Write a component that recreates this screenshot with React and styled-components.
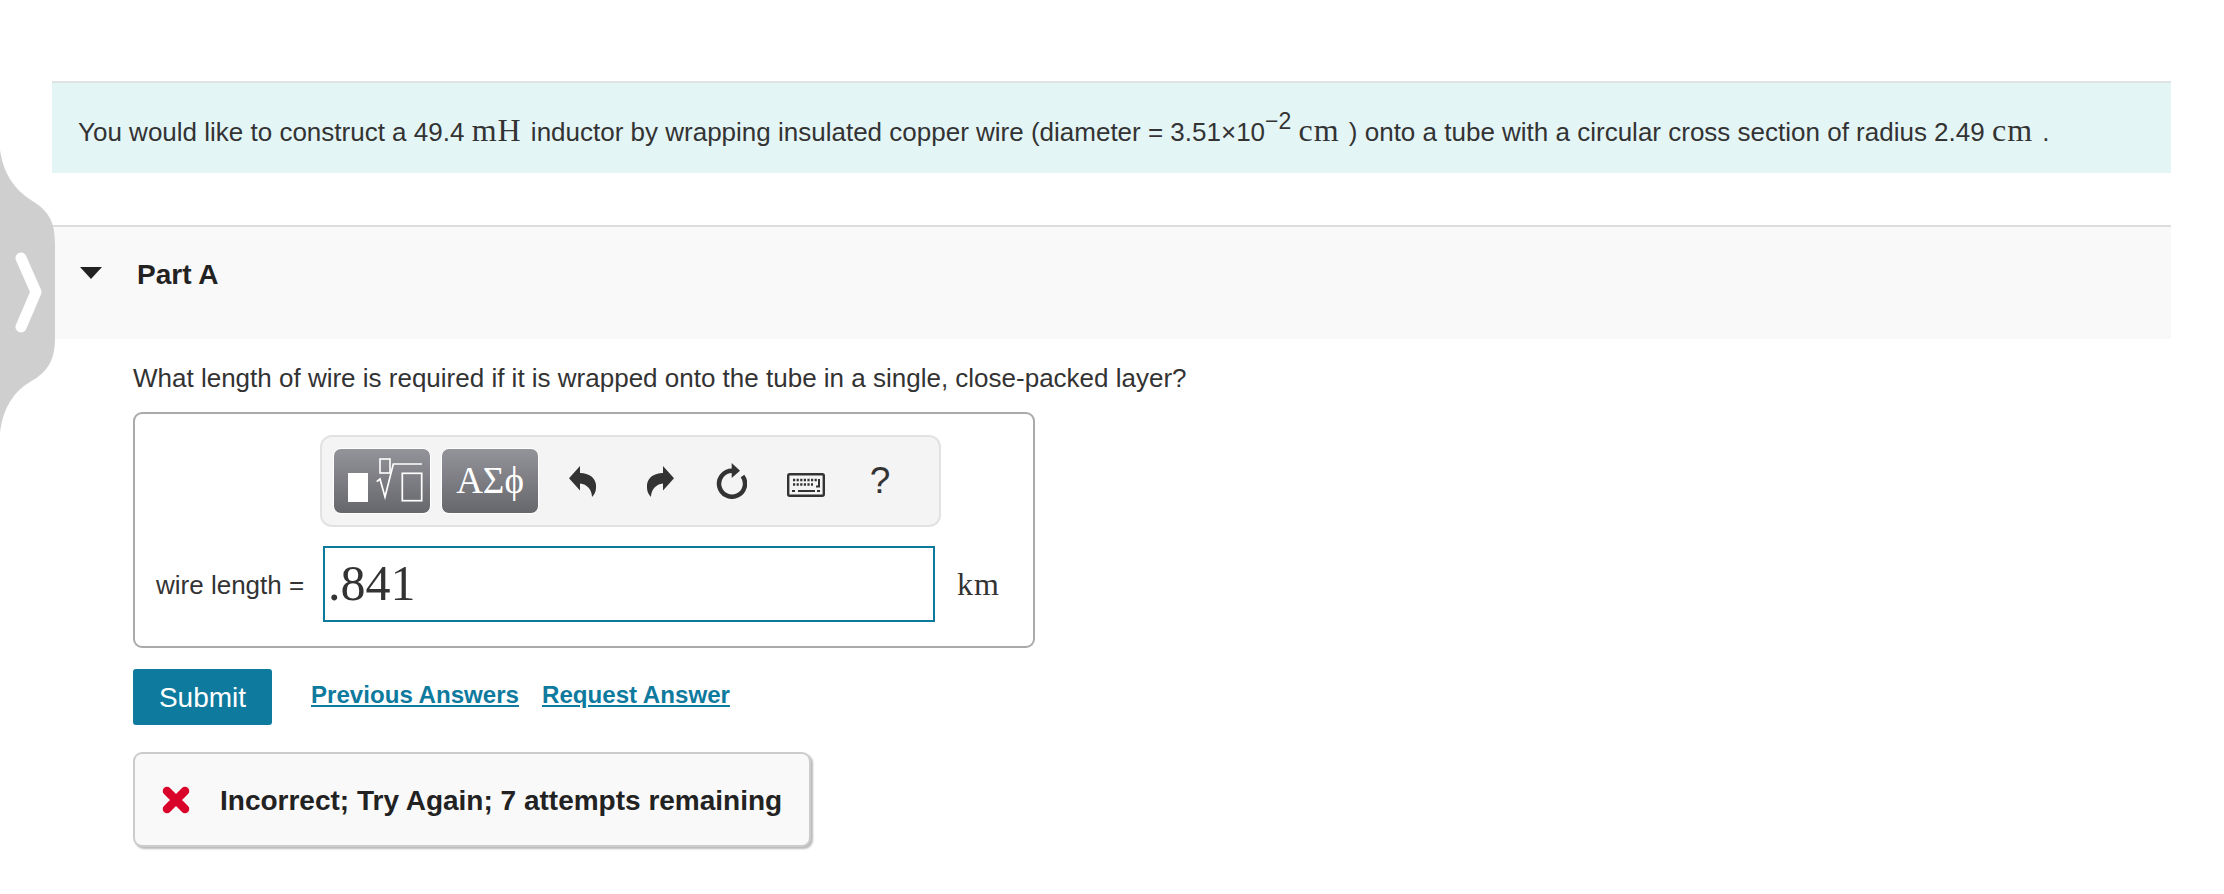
import React from 'react';
import styled, { createGlobalStyle } from 'styled-components';

const Global = createGlobalStyle`
  html, body { margin: 0; padding: 0; background: #fff; }
  body { font-family: "Liberation Sans", Arial, sans-serif; color: #333; }
`;
const Page = styled.div`
  position: relative; width: 2224px; height: 894px; overflow: hidden;
  padding: 81px 53px 0 52px; box-sizing: border-box;
`;
const Handle = styled.svg`position: absolute; left: 0; top: 140px;`;
const Intro = styled.div`
  height: 92px; box-sizing: border-box; border-top: 2px solid #dfe3e4; background: #e4f5f6;
  padding: 8px 26px 0; display: flex; align-items: center; font-size: 26px; color: #333;
`;
const IntroText = styled.span`white-space: pre;`;
const Math = styled.span`
  font-family: "Liberation Serif", serif; font-size: 32px; line-height: 0; letter-spacing: 1px; margin-right: 2px;
`;
const Sup = styled.sup`font-size: 23px; line-height: 0; vertical-align: 12px;`;
const PartHeader = styled.div`
  margin-top: 52px; height: 114px; box-sizing: border-box; border-top: 2px solid #ddd; background: #f9f9f9;
  display: flex; align-items: center; padding: 0 0 16px 28px;
`;
const Caret = styled.span`
  width: 0; height: 0; border-left: 11px solid transparent; border-right: 11px solid transparent;
  border-top: 12px solid #222; margin-right: 35px; margin-top: -4px;
`;
const PartTitle = styled.h2`margin: 0; font-size: 28px; font-weight: 700; color: #222;`;
const Body = styled.div`padding-left: 81px;`;
const Question = styled.p`margin: 24px 0 0; font-size: 26px; line-height: 30px; color: #333;`;
const AnswerBox = styled.div`
  margin-top: 19px; width: 902px; height: 236px; box-sizing: border-box; border: 2px solid #aaa; border-radius: 9px;
  padding: 21px 0 0 21px; display: flex; flex-direction: column;
`;
const Toolbar = styled.div`
  margin-left: 164px; width: 621px; height: 92px; box-sizing: border-box; border: 2px solid #e2e2e2; border-radius: 12px;
  background: #f4f4f4; display: flex; align-items: center; padding-left: 11px;
`;
const TemplateBtn = styled.div`
  width: 96px; height: 64px; border-radius: 8px; margin-right: 10px;
  background: linear-gradient(#93939a, #66676b); border: 1px solid #fff;
  display: flex; align-items: center; justify-content: center; color: #fff;
  font-family: "Liberation Serif", serif; font-size: 37px; flex: none; line-height: 60px;
`;
const ToolIcon = styled.div`
  width: ${p => p.$w}px; flex: none; display: flex; align-items: center; justify-content: center; color: #333;
  font-size: 37px; font-family: "Liberation Sans", sans-serif; margin-top: ${p => p.$mt || 0}px;
`;
const InputRow = styled.div`display: flex; align-items: center; margin-top: 19px; font-size: 26px; color: #333;`;
const Label = styled.span`width: 167px; flex: none; white-space: pre; margin-top: 2px;`;
const Field = styled.div`
  width: 612px; height: 76px; box-sizing: border-box; border: 2px solid #0d7a9c; background: #fff;
  font-family: "Liberation Serif", serif; font-size: 50px; line-height: 70px; padding-left: 3px; color: #333;
`;
const Unit = styled.span`
  margin-left: 22px; font-family: "Liberation Serif", serif; font-size: 32px; letter-spacing: 1px; color: #333;
`;
const Actions = styled.div`margin-top: 21px; display: flex; align-items: flex-start;`;
const Submit = styled.button`
  width: 139px; height: 56px; border: 0; border-radius: 3px; background: #0e7a9e; color: #fff;
  font-family: "Liberation Sans", sans-serif; font-size: 28px; padding: 2px 0 0;
`;
const Links = styled.div`display: flex; gap: 23px; margin-left: 39px; margin-top: 12px;`;
const ActionLink = styled.a`font-size: 24.1px; font-weight: 700; color: #0e7a9e; text-decoration: underline;`;
const Feedback = styled.div`
  margin-top: 27px; width: 678px; height: 95px; box-sizing: border-box; border: 2px solid #ccc; border-radius: 9px; background: #f9f9f9;
  box-shadow: 2px 2px 2px #bbb; display: flex; align-items: center; padding: 0 0 0 26px;
`;
const FeedbackText = styled.span`margin-left: 29px; font-size: 28px; font-weight: 700; color: #222; margin-top: 3px;`;

const Keyboard = () => (
  <svg width="38" height="24" viewBox="0 0 38 24" fill="none">
    <rect x="1.2" y="1.2" width="35.6" height="21.6" rx="1.5" stroke="#333" strokeWidth="2.4" />
    <path d="M6 7h24M6 11.5h20" stroke="#333" strokeWidth="2.4" strokeDasharray="2.2 1.4" />
    <path d="M32 6v7.5h-3" stroke="#333" strokeWidth="2" />
    <path d="M5 18h3M11 18h17M30 18h3" stroke="#333" strokeWidth="2.2" />
  </svg>
);
const Undo = ({ flip }) => (
  <svg width="27" height="31" viewBox="0 0 27 31" style={flip ? { transform: 'scaleX(-1)' } : undefined}>
    <path fill="#333" d="M0 12.3L11 0V7C22 7 28 14 27 22C27 26 25 29 23 31C23 24 18 18 11 17.5V24.5Z" />
  </svg>
);

export default function App() {
  return (
    <Page>
      <Global />
      <Handle width="60" height="300" viewBox="0 0 60 300">
        <path fill="#cfcfcf" d="M0 10C4 38 18 52 34 62C50 72 55 84 55 104V198C55 220 48 232 30 242C14 251 3 268 0 292Z" />
        <path fill="none" stroke="#fff" strokeWidth="11" strokeLinecap="round" strokeLinejoin="round" d="M21 118L36 152L21 187" />
      </Handle>
      <Intro>
        <IntroText>
          You would like to construct a 49.4 <Math>mH</Math> inductor by wrapping insulated copper wire (diameter = 3.51×10<Sup>−2</Sup> <Math>cm</Math> ) onto a tube with a circular cross section of radius 2.49 <Math>cm</Math> .
        </IntroText>
      </Intro>
      <PartHeader>
        <Caret />
        <PartTitle>Part A</PartTitle>
      </PartHeader>
      <Body>
        <Question>What length of wire is required if it is wrapped onto the tube in a single, close-packed layer?</Question>
        <AnswerBox>
          <Toolbar>
            <TemplateBtn>
              <svg width="96" height="64" viewBox="0 0 96 64" fill="none">
                <rect x="14" y="24" width="20" height="29" fill="#fff" />
                <rect x="46" y="10" width="10" height="14" stroke="#fff" strokeWidth="1.6" />
                <path d="M42.7 32.7L46 30L51 48L59.3 15H88" stroke="#fff" strokeWidth="1.7" />
                <rect x="68.3" y="24.3" width="19.4" height="27.4" stroke="#fff" strokeWidth="1.7" />
              </svg>
            </TemplateBtn>
            <TemplateBtn>ΑΣϕ</TemplateBtn>
            <ToolIcon $w={67}><Undo /></ToolIcon>
            <ToolIcon $w={88}><Undo flip /></ToolIcon>
            <ToolIcon $w={55}>
              <svg width="31" height="36" viewBox="0 0 31 36" fill="none">
                <path d="M16 7.7A13 13 0 1 0 26.5 13" stroke="#333" strokeWidth="4.5" />
                <path d="M15.7 0L24 7.7L15.7 15Z" fill="#333" />
              </svg>
            </ToolIcon>
            <ToolIcon $w={94} $mt={8}><Keyboard /></ToolIcon>
            <ToolIcon $w={54}>?</ToolIcon>
          </Toolbar>
          <InputRow>
            <Label>wire length = </Label>
            <Field>.841</Field>
            <Unit>km</Unit>
          </InputRow>
        </AnswerBox>
        <Actions>
          <Submit>Submit</Submit>
          <Links>
            <ActionLink href="#">Previous Answers</ActionLink>
            <ActionLink href="#">Request Answer</ActionLink>
          </Links>
        </Actions>
        <Feedback>
          <svg width="30" height="30" viewBox="0 0 30 30">
            <path d="M6 6L24 24M24 6L6 24" stroke="#d90429" strokeWidth="8.5" strokeLinecap="round" />
          </svg>
          <FeedbackText>Incorrect; Try Again; 7 attempts remaining</FeedbackText>
        </Feedback>
      </Body>
    </Page>
  );
}
